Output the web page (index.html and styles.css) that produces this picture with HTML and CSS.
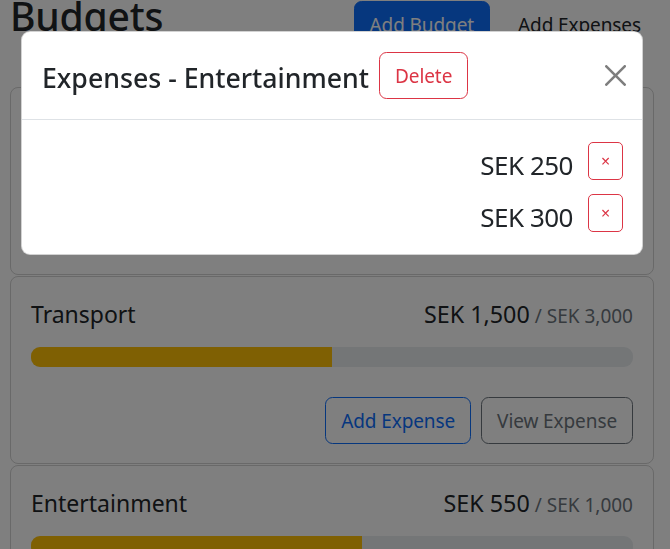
FILE: index.html
```html
<!DOCTYPE html>
<html lang="en">
<head>
<meta charset="utf-8">
<title>Budgets</title>
<link rel="stylesheet" href="styles.css">
</head>
<body>
<div class="page">
  <header class="top">
    <h1 class="page-title">Budgets</h1>
    <button class="btn btn-primary">Add Budget</button>
    <button class="btn btn-plain">Add Expenses</button>
  </header>
  <div class="cards">
    <section class="card">
      <div class="card-head">
        <span class="card-title">Groceries</span>
        <span class="amount">SEK 2,000<span class="max">/ SEK 5,000</span></span>
      </div>
      <div class="progress"><div class="bar" style="width:40%"></div></div>
      <div class="actions">
        <button class="btn btn-outline-primary">Add Expense</button>
        <button class="btn btn-outline-secondary">View Expense</button>
      </div>
    </section>
    <section class="card">
      <div class="card-head">
        <span class="card-title">Transport</span>
        <span class="amount">SEK 1,500<span class="max">/ SEK 3,000</span></span>
      </div>
      <div class="progress"><div class="bar" style="width:50%"></div></div>
      <div class="actions">
        <button class="btn btn-outline-primary">Add Expense</button>
        <button class="btn btn-outline-secondary">View Expense</button>
      </div>
    </section>
    <section class="card">
      <div class="card-head">
        <span class="card-title">Entertainment</span>
        <span class="amount">SEK 550<span class="max">/ SEK 1,000</span></span>
      </div>
      <div class="progress"><div class="bar" style="width:55%"></div></div>
      <div class="actions">
        <button class="btn btn-outline-primary">Add Expense</button>
        <button class="btn btn-outline-secondary">View Expense</button>
      </div>
    </section>
  </div>
</div>

<div class="backdrop"></div>

<div class="modal-layer">
  <div class="modal">
    <div class="modal-header">
      <div class="modal-title">Expenses - Entertainment</div>
      <button class="btn btn-outline-danger">Delete</button>
      <button class="btn-close" aria-label="Close">
        <svg viewBox="0 0 16 16" width="21" height="21" aria-hidden="true"><path d="M.293.293a1 1 0 0 1 1.414 0L8 6.586 14.293.293a1 1 0 1 1 1.414 1.414L9.414 8l6.293 6.293a1 1 0 0 1-1.414 1.414L8 9.414l-6.293 6.293a1 1 0 0 1-1.414-1.414L6.586 8 .293 1.707a1 1 0 0 1 0-1.414"/></svg>
      </button>
    </div>
    <div class="modal-body">
      <div class="expense-row">
        <span class="expense-amount">SEK 250</span>
        <button class="btn-sm-danger">&times;</button>
      </div>
      <div class="expense-row">
        <span class="expense-amount">SEK 300</span>
        <button class="btn-sm-danger">&times;</button>
      </div>
    </div>
  </div>
</div>
</body>
</html>
```

FILE: styles.css
```css
* { box-sizing: border-box; }

html, body {
  margin: 0;
  padding: 0;
  overflow: hidden;
  background: #ffffff;
}

body {
  font-family: "Noto Sans", "Open Sans", sans-serif;
  color: #212529;
  font-size: 19px;
  line-height: 1.5;
  width: 670px;
  height: 549px;
}

.page {
  padding: 1px 13px 0 10px;
}

/* header */
.top {
  display: flex;
  align-items: center;
  gap: 12px;
  height: 47px;
  margin-bottom: 39px;
}

.page-title {
  margin: 0 auto 19px 0;
  font-size: 39px;
  font-weight: 500;
  line-height: 47px;
  letter-spacing: -0.2px;
}

/* buttons */
.btn {
  font-family: inherit;
  font-size: 19px;
  line-height: 30px;
  padding: 7.5px 15px;
  border: 1px solid transparent;
  border-radius: 7.5px;
  background: transparent;
  color: #212529;
  cursor: pointer;
  letter-spacing: -0.1px;
}

.btn-primary {
  background: #0d6efd;
  border-color: #0d6efd;
  color: #ffffff;
}

.btn-plain {
  color: #212529;
}

.btn-outline-primary {
  border-color: #0d6efd;
  color: #0d6efd;
}

.btn-outline-secondary {
  border-color: #6c757d;
  color: #6c757d;
}

.btn-outline-danger {
  border-color: #dc3545;
  color: #dc3545;
}

/* cards */
.cards {
  display: flex;
  flex-direction: column;
  gap: 1px;
  margin-right: 3px;
}

.card {
  border: 1px solid rgba(0, 0, 0, 0.175);
  border-radius: 8px;
  padding: 20px;
  height: 188px;
}

.card-head {
  display: flex;
  justify-content: space-between;
  align-items: baseline;
  height: 30px;
  margin-bottom: 20px;
}

.card-title {
  font-size: 23px;
  line-height: 30px;
  padding-top: 2px;
}

.amount {
  font-size: 23.3px;
  line-height: 30px;
  padding-top: 2px;
}

.max {
  font-size: 19px;
  color: #6c757d;
  margin-left: 5px;
}

.progress {
  height: 20px;
  border-radius: 9px;
  background: #e9ecef;
  overflow: hidden;
  display: flex;
}

.bar {
  background: #ffc107;
  height: 100%;
}

.actions {
  display: flex;
  justify-content: flex-end;
  gap: 10px;
  margin-top: 30px;
}

/* modal */
.backdrop {
  position: fixed;
  inset: 0;
  background: rgba(0, 0, 0, 0.5);
}

.modal-layer {
  position: fixed;
  inset: 0;
  padding: 31px 27px 0 21px;
}

.modal {
  background: #ffffff;
  border: 1px solid rgba(0, 0, 0, 0.175);
  border-radius: 9px;
  overflow: hidden;
}

.modal-header {
  display: flex;
  align-items: center;
  padding: 20px;
  border-bottom: 1px solid #dee2e6;
}

.modal-title {
  font-size: 26.7px;
  font-weight: 500;
  line-height: 32px;
  margin-top: 4px;
  margin-right: 10px;
  color: #212529;
}

.btn-close {
  margin-left: auto;
  margin-right: -8px;
  padding: 4px;
  width: 30px;
  height: 30px;
  border: 0;
  background: transparent;
  display: flex;
  align-items: center;
  justify-content: center;
  opacity: 0.5;
  cursor: pointer;
}

.btn-close svg {
  fill: #000000;
  display: block;
}

.modal-body {
  display: flex;
  flex-direction: column;
  gap: 14px;
  padding: 22px 19px 22px 20px;
}

.expense-row {
  display: flex;
  justify-content: flex-end;
  align-items: flex-start;
  gap: 15px;
  height: 38px;
}

.expense-amount {
  font-size: 26px;
  letter-spacing: -0.5px;
  line-height: 38px;
  margin-top: 4px;
  color: #212529;
}

.btn-sm-danger {
  font-family: inherit;
  font-size: 16px;
  line-height: 26px;
  padding: 5px 10px;
  width: 35px;
  height: 38px;
  border: 1px solid #dc3545;
  border-radius: 5px;
  background: transparent;
  color: #dc3545;
  cursor: pointer;
}
```
